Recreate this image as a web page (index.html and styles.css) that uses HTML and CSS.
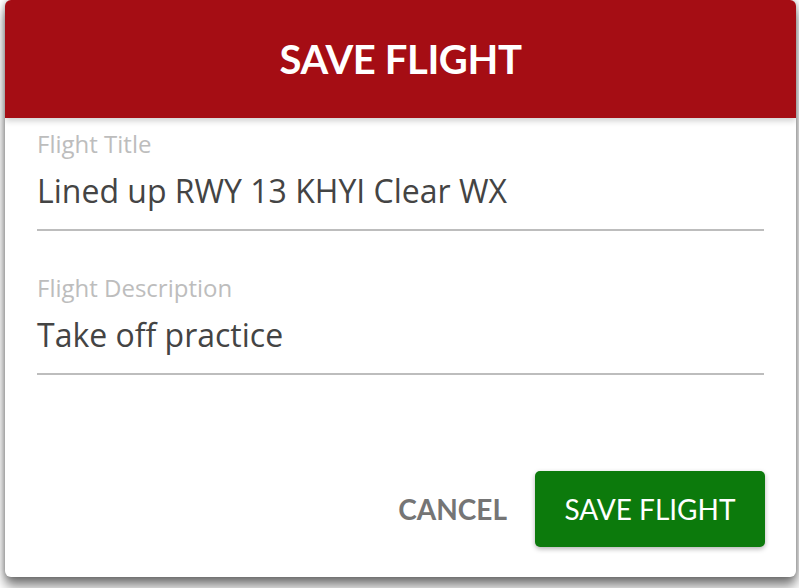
FILE: index.html
```html
<!DOCTYPE html>
<html>
<head>
<meta charset="utf-8">
<link rel="stylesheet" href="styles.css">
</head>
<body>
<div class="dialog">
  <div class="header"><h1 class="title">SAVE FLIGHT</h1></div>
  <div class="body">
    <div class="field">
      <div class="label">Flight Title</div>
      <div class="value">Lined up RWY 13 KHYI Clear WX</div>
    </div>
    <div class="field">
      <div class="label">Flight Description</div>
      <div class="value">Take off practice</div>
    </div>
  </div>
  <div class="actions">
    <button class="btn-cancel">CANCEL</button>
    <button class="btn-save">SAVE FLIGHT</button>
  </div>
</div>
</body>
</html>
```
FILE: styles.css
```css
html, body {
  margin: 0;
  padding: 0;
  background: #ffffff;
  width: 799px;
  height: 588px;
  overflow: hidden;
}
body {
  padding: 0 3px 0 5px;
  box-sizing: border-box;
}
.dialog {
  width: 791px;
  height: 577px;
  background: #fff;
  border-radius: 6px;
  box-shadow: 0 9px 12px rgba(0,0,0,0.5), 0 0 6px rgba(0,0,0,0.3);
  display: flex;
  flex-direction: column;
  overflow: hidden;
}
.header {
  height: 118px;
  background: #a50d14;
  display: flex;
  align-items: center;
  justify-content: center;
  box-shadow: 0 3px 6px rgba(0,0,0,0.18);
  position: relative;
  z-index: 1;
  flex-shrink: 0;
}
.title {
  margin: 0;
  color: #fff;
  font-family: Lato, "Liberation Sans", sans-serif;
  font-weight: 700;
  font-size: 40px;
  letter-spacing: -0.4px;
}
.body {
  padding: 11px 32px 0 32px;
  display: flex;
  flex-direction: column;
  gap: 42px;
}
.field {
  border-bottom: 2px solid #bdbdbd;
  font-family: "Open Sans", sans-serif;
}
.label {
  color: #bdbdbd;
  font-size: 24px;
  line-height: 30px;
}
.value {
  color: #444;
  font-size: 32px;
  line-height: 44px;
  padding: 10px 0 16px;
}
.actions {
  margin-top: auto;
  display: flex;
  justify-content: flex-end;
  align-items: center;
  gap: 28px;
  padding: 0 31px 30px 0;
}
.btn-cancel {
  border: 0;
  background: none;
  font-family: Lato, sans-serif;
  font-weight: 700;
  font-size: 28px;
  color: #757575;
  padding: 0;
}
.btn-save {
  border: 0;
  width: 230px;
  height: 76px;
  background: #0c7a0c;
  border-radius: 5px;
  color: #fff;
  font-family: Lato, sans-serif;
  font-size: 28px;
  box-shadow: 0 2px 5px rgba(0,0,0,0.3);
}
```
